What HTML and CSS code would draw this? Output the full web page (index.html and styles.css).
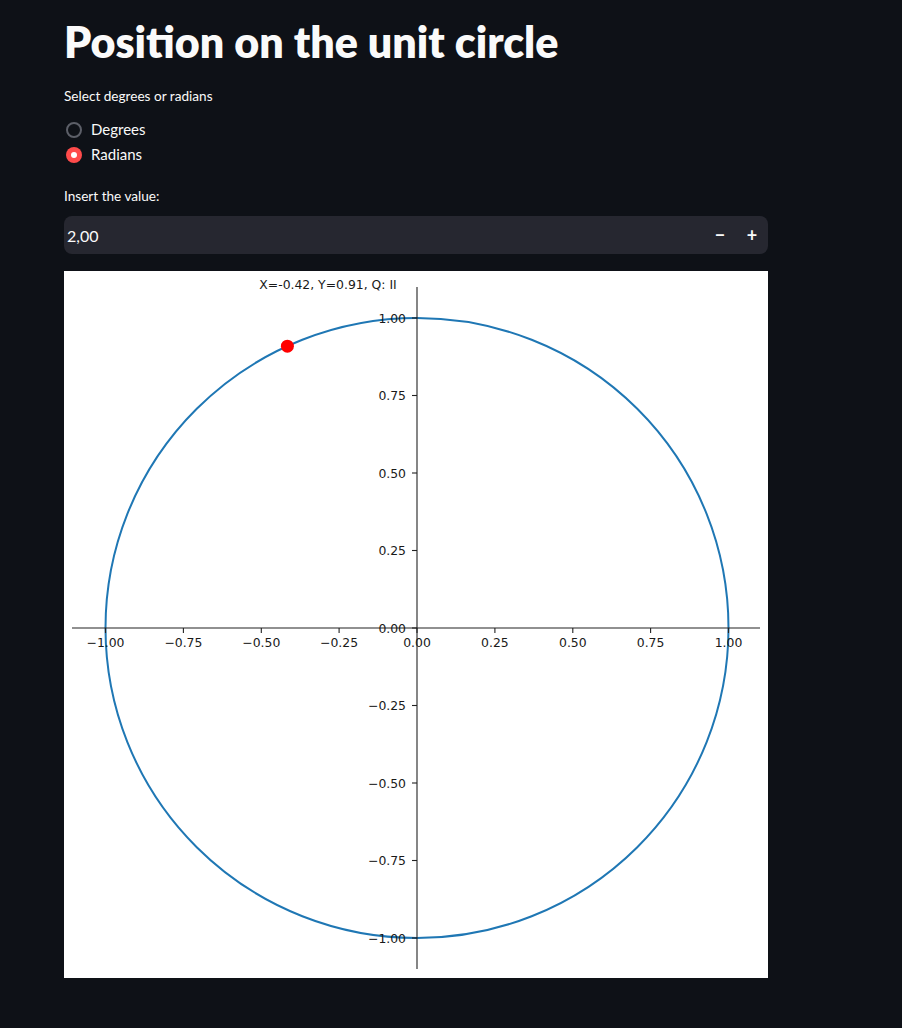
FILE: index.html
```html
<!DOCTYPE html>
<html lang="en">
<head>
<meta charset="utf-8">
<title>Position on the unit circle</title>
<link rel="stylesheet" href="styles.css">
</head>
<body>
<main class="page">
  <h1 class="title">Position on the unit circle</h1>

  <div class="field">
    <div class="label">Select degrees or radians</div>
    <div class="radios">
      <div class="radio"><span class="dot"></span><span class="radio-text">Degrees</span></div>
      <div class="radio checked"><span class="dot"></span><span class="radio-text">Radians</span></div>
    </div>
  </div>

  <div class="field field-gap">
    <div class="label">Insert the value:</div>
    <div class="number-input">
      <span class="value">2,00</span>
      <span class="steps"><span class="step">&minus;</span><span class="step">+</span></span>
    </div>
  </div>

  <div class="chart">
    <svg class="plot" width="704" height="707" viewBox="0 0 704 707" xmlns="http://www.w3.org/2000/svg">
      <rect x="0" y="0" width="704" height="707" fill="#ffffff"/>
      <text class="ttl" x="264" y="18" text-anchor="middle">X=-0.42, Y=0.91, Q: II</text>
      <ellipse cx="353" cy="357" rx="311.5" ry="310" fill="none" stroke="#1f77b4" stroke-width="2"/>
      <!-- spines -->
      <line x1="8" y1="357" x2="696" y2="357" class="ax"/>
      <line x1="353" y1="16" x2="353" y2="698" class="ax"/>
      <!-- x ticks -->
      <g class="ax">
        <line x1="41.5" y1="357" x2="41.5" y2="362"/>
        <line x1="119.4" y1="357" x2="119.4" y2="362"/>
        <line x1="197.3" y1="357" x2="197.3" y2="362"/>
        <line x1="275.1" y1="357" x2="275.1" y2="362"/>
        <line x1="353" y1="357" x2="353" y2="362"/>
        <line x1="430.9" y1="357" x2="430.9" y2="362"/>
        <line x1="508.8" y1="357" x2="508.8" y2="362"/>
        <line x1="586.6" y1="357" x2="586.6" y2="362"/>
        <line x1="664.5" y1="357" x2="664.5" y2="362"/>
      </g>
      <g class="lbl" text-anchor="middle">
        <text x="41.5" y="376">&#8722;1.00</text>
        <text x="119.4" y="376">&#8722;0.75</text>
        <text x="197.3" y="376">&#8722;0.50</text>
        <text x="275.1" y="376">&#8722;0.25</text>
        <text x="353" y="376">0.00</text>
        <text x="430.9" y="376">0.25</text>
        <text x="508.8" y="376">0.50</text>
        <text x="586.6" y="376">0.75</text>
        <text x="664.5" y="376">1.00</text>
      </g>
      <!-- y ticks -->
      <g class="ax">
        <line x1="348" y1="47" x2="353" y2="47"/>
        <line x1="348" y1="124.5" x2="353" y2="124.5"/>
        <line x1="348" y1="202" x2="353" y2="202"/>
        <line x1="348" y1="279.5" x2="353" y2="279.5"/>
        <line x1="348" y1="357" x2="353" y2="357"/>
        <line x1="348" y1="434.5" x2="353" y2="434.5"/>
        <line x1="348" y1="512" x2="353" y2="512"/>
        <line x1="348" y1="589.5" x2="353" y2="589.5"/>
        <line x1="348" y1="667" x2="353" y2="667"/>
      </g>
      <g class="lbl" text-anchor="end">
        <text x="342" y="51.5">1.00</text>
        <text x="342" y="129">0.75</text>
        <text x="342" y="206.5">0.50</text>
        <text x="342" y="284">0.25</text>
        <text x="342" y="361.5">0.00</text>
        <text x="342" y="439">&#8722;0.25</text>
        <text x="342" y="516.5">&#8722;0.50</text>
        <text x="342" y="594">&#8722;0.75</text>
        <text x="342" y="671.5">&#8722;1.00</text>
      </g>
      <circle cx="223.4" cy="75.2" r="6.5" fill="#ff0000"/>
    </svg>
  </div>
</main>
</body>
</html>
```

FILE: styles.css
```css
html, body {
  margin: 0;
  padding: 0;
  background: #0e1117;
}

body {
  color: #fafafa;
  font-family: "Lato", "Noto Sans", sans-serif;
}

.page {
  width: 704px;
  margin-left: 64px;
  padding-top: 14px;
  padding-bottom: 50px;
}

.title {
  margin: 0;
  font-size: 43px;
  font-weight: 800;
  line-height: 56px;
  letter-spacing: 0;
  color: #fafafa;
}

.field {
  margin-top: 16px;
}

.field.field-gap {
  margin-top: 21px;
}

.label {
  font-size: 13.6px;
  line-height: 20px;
  color: #fafafa;
}

.radios {
  margin-top: 13px;
  display: flex;
  flex-direction: column;
  gap: 4px;
}

.radio {
  display: flex;
  align-items: center;
  height: 21px;
  gap: 9px;
  padding-left: 2px;
}

.dot {
  width: 16px;
  height: 16px;
  box-sizing: border-box;
  border-radius: 50%;
  border: 2px solid #5c5f68;
  display: flex;
  align-items: center;
  justify-content: center;
}

.radio.checked .dot {
  border: none;
  background: #ff4b4b;
}

.radio.checked .dot::after {
  content: "";
  width: 6px;
  height: 6px;
  border-radius: 50%;
  background: #ffffff;
}

.radio-text {
  font-size: 15px;
  line-height: 21px;
}

.number-input {
  margin-top: 10px;
  height: 38px;
  background: #262730;
  border-radius: 8px;
  display: flex;
  align-items: center;
  justify-content: space-between;
  padding-left: 3px;
}

.value {
  font-size: 16px;
}

.steps {
  display: flex;
}

.step {
  width: 32px;
  text-align: center;
  font-size: 18px;
  font-weight: 700;
  line-height: 38px;
}

.chart {
  margin-top: 17px;
  line-height: 0;
}

.plot {
  display: block;
}

.ax {
  stroke: #222222;
  stroke-width: 1.1;
}

.ttl, .lbl {
  font-family: "DejaVu Sans", sans-serif;
  font-size: 12.4px;
  fill: #1a1a1a;
}
```
